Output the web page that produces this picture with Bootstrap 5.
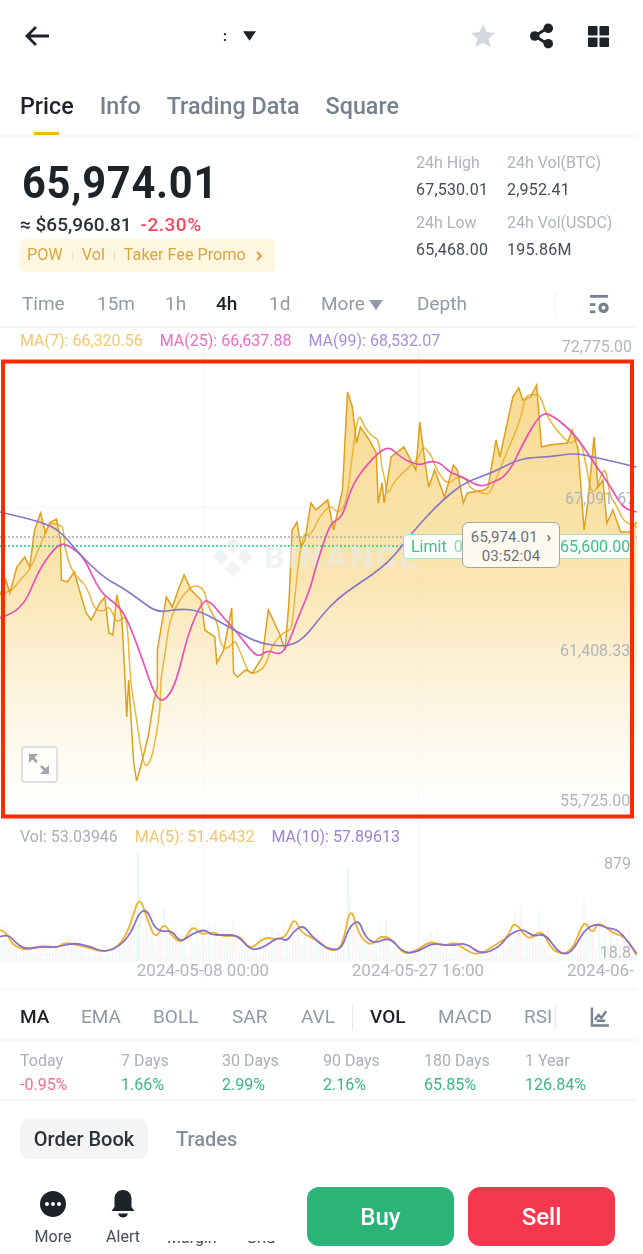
<!DOCTYPE html>
<html lang="en">
<head>
  <meta charset="UTF-8">
  <title>BTC/USDC Chart</title>
  <meta name="viewport" content="width=device-width, initial-scale=1">
  <link href="https://cdn.jsdelivr.net/npm/bootstrap@5.3.3/dist/css/bootstrap.min.css" rel="stylesheet">
  <style>
    body {
      font-family: Roboto, "Liberation Sans", sans-serif;
      color: #1e2329;
      background: #fff;
      overflow: hidden;
      height: 1254px;
    }
    .screen { width: 637px; height: 1254px; overflow: hidden; filter: blur(.4px); }
    .top-bar { height: 72px; padding: 0 27px 0 24px; }
    .title-mark { margin-left: 173px; font-size: 14px; line-height: 1; }
    .tab-row { height: 65px; padding: 0 20px; gap: 26px; border-bottom: 2px solid #f5f5f5; font-size: 23.3px; font-weight: 500; color: #76808f; }
    .tab-item { position: relative; padding-top: 17px; }
    .tab-item.on { color: #1e2329; }
    .tab-item.on::after { content: ""; position: absolute; left: 14px; width: 25px; height: 3px; bottom: 0; background: #f0b90b; }
    .ticker { height: 137px; padding: 0 21px 0 20px; }
    .last-price { font-size: 44px; font-weight: 700; letter-spacing: .8px; line-height: 1; margin: 24px 0 0 2px; transform: scaleX(.945); transform-origin: left; }
    .fiat { font-size: 19px; font-weight: 500; margin-top: 9px; line-height: 22px; color: #2b3139; }
    .fiat span { color: #f6465d; margin-left: 9px; letter-spacing: .5px; }
    .promo { margin-top: 3px; width: 255px; height: 33px; background: #fef6e0; color: #dca53d; border-radius: 6px; font-size: 16.2px; padding: 0 7px; gap: 9px; }
    .promo i { width: 1px; height: 8px; background: #f0dcae; }
    .stat-box { width: 91px; margin-top: 15px; }
    .stat-box.wide { width: 109px; }
    .stat-label { font-size: 16px; line-height: 22px; color: #aeb4bc; margin-bottom: 5px; white-space: nowrap; }
    .stat-val { font-size: 16px; letter-spacing: .2px; line-height: 22px; color: #474d57; margin-bottom: 11px; }
    .range-row { height: 54px; padding: 9px 0 0 22px; border-bottom: 2px solid #f5f5f5; font-size: 19px; color: #929aa5; }
    .range-row .on { color: #1e2329; font-weight: 500; }
    .range-sep { width: 1px; height: 26px; background: #f0f1f2; }
    .charts {
      position: relative;
      height: 662px;
      background:
        linear-gradient(#f3f4f6, #f3f4f6) 203px 0 / 1px 650px no-repeat,
        linear-gradient(#f3f4f6, #f3f4f6) 418px 0 / 1px 650px no-repeat;
      border-bottom: 2px solid #f7f7f8;
    }
    .legend-row { height: 26px; padding: 0 5px 0 20px; gap: 17px; font-size: 16px; line-height: 26px; white-space: nowrap; }
    .legend-low { padding-top: 4px; height: 30px; }
    .chart-svg { display: block; width: 637px; }
    .c-ma7 { color: #f3c76d; }
    .c-ma25 { color: #ee6cc4; }
    .c-ma99 { color: #a58fdb; }
    .c-vol { color: #a9afb8; }
    .c-ma5 { color: #f2c56a; }
    .c-ma10 { color: #9b84d3; }
    .c-axis { color: #b0b5bc; line-height: 38px; }
    .axis-text { font-size: 16px; fill: #b0b5bc; }
    .date-text { font-size: 17px; fill: #b0b5bc; }
    .expand-btn {
      position: absolute;
      left: 21px;
      top: 418px;
      width: 37px;
      height: 37px;
      border: 2px solid #dcdfe3;
      border-radius: 4px;
      background: rgba(255,255,255,.6);
    }
    .tip-box {
      position: absolute;
      left: 462px;
      top: 194px;
      width: 98px;
      height: 46px;
      background: #fefaf0;
      border: 1.5px solid #a6a59e;
      border-radius: 6px;
      font-size: 15px;
      letter-spacing: .1px;
      line-height: 19px;
      color: #6b7078;
      text-align: center;
      padding-top: 5px;
    }
    .tip-box b { color: #5e6673; margin-left: 5px; }
    .limit-tag {
      position: absolute;
      left: 403px;
      top: 206px;
      width: 227px;
      height: 25px;
      overflow: hidden;
      background: #fefefa;
      border: 1.5px solid #a5e0c5;
      border-right: 0;
      border-radius: 5px 0 0 5px;
      color: #3cc08c;
      font-size: 16px;
      line-height: 23px;
      padding-left: 7px;
      white-space: nowrap;
    }
    .limit-tag em { font-style: normal; opacity: .6; margin-left: 3px; }
    .limit-price { position: absolute; left: 149px; top: -2px; bottom: -2px; right: -4px; border: 1.5px solid #a5e0c5; border-radius: 5px; padding: 1px 0 0 6px; }
    .ind-row { height: 51px; padding: 5px 0 0 20px; border-bottom: 2px solid #f5f5f5; font-size: 19px; color: #929aa5; }
    .ind-row .on { color: #1e2329; font-weight: 500; }
    .ind-sep { width: 1px; height: 26px; background: #e6e8ea; }
    .perf-row { height: 60px; padding: 8px 20px 0; border-bottom: 2px solid #f5f5f5; }
    .perf-cell { flex: none; width: 101px; font-size: 16px; line-height: 24px; color: #a9afb8; }
    .perf-cell span { display: block; color: #37b985; }
    .perf-cell span.down { color: #f6708a; }
    .book-row { height: 75px; padding: 18px 20px 0; font-size: 20px; }
    .book-on { width: 128px; height: 40px; background: #f5f5f5; border-radius: 9px; text-align: center; line-height: 40px; font-weight: 500; color: #2b3139; }
    .book-off { line-height: 40px; margin-left: 28px; color: #848e9c; font-weight: 500; }
    .action-row { padding: 11px 22px 0 0; position: relative; }
    .act-item { width: 70px; text-align: center; font-size: 16px; color: #474d57; line-height: 20px; }
    .act-item svg { display: block; margin: 3px auto 9px; }
    .cut-tabs { position: absolute; top: 65px; height: 6px; overflow: hidden; font-size: 16px; line-height: 20px; color: #474d57; }
    .cut-tabs span { display: block; margin-top: -13px; }
    .trade-btn { width: 147px; height: 59px; border: 0; border-radius: 12px; color: #fff; font-size: 24px; font-weight: 500; }
    .buy-btn, .buy-btn:hover { background: #2ab477; color: #fff; }
    .sell-btn, .sell-btn:hover { background: #f6384f; color: #fff; }
  </style>
</head>
<body>
  <div class="screen">
  <!-- Header -->
  <div class="top-bar d-flex align-items-center">
    <svg width="26" height="24" viewBox="0 0 26 24" fill="none" stroke="#1e2329" stroke-width="2.8"><path d="M25 12H3M12 3l-9 9 9 9"/></svg>
    <span class="title-mark fw-bold">:</span>
    <svg class="ms-3" width="13" height="10" viewBox="0 0 14 10"><path d="M0 0h14L7 10z" fill="#1e2329"/></svg>
    <svg class="ms-auto" width="26" height="26" viewBox="0 0 26 26"><path d="M13 1l3.6 8 8.4.9-6.3 5.700 1.800 8.400L13 19.700 5.500 24l1.800-8.400L1 9.900 9.400 9z" fill="#d5d8de"/></svg>
    <svg style="margin-left:33px" width="25" height="28" viewBox="0 0 26 28" fill="#1e2329"><path d="M19 6L6 14l13 8" fill="none" stroke="#1e2329" stroke-width="3"/><circle cx="20" cy="6" r="5"/><circle cx="6" cy="14" r="5"/><circle cx="20" cy="22" r="5"/></svg>
    <svg style="margin-left:33px" width="23" height="23" viewBox="0 0 24 24" fill="#1e2329"><rect x="1" y="1" width="10" height="10" rx="1"/><rect x="13" y="1" width="10" height="10" rx="1"/><rect x="1" y="13" width="10" height="10" rx="1"/><rect x="13" y="13" width="10" height="10" rx="1"/></svg>
  </div>

  <div class="tab-row d-flex">
    <div class="tab-item on">Price</div>
    <div class="tab-item">Info</div>
    <div class="tab-item">Trading Data</div>
    <div class="tab-item">Square</div>
  </div>

  <!-- Ticker -->
  <div class="ticker d-flex">
    <div class="flex-grow-1">
      <div class="last-price">65,974.01</div>
      <div class="fiat">≈ $65,960.81<span>-2.30%</span></div>
      <div class="promo d-flex align-items-center">POW <i></i> Vol <i></i> Taker Fee Promo
        <svg width="8" height="10" viewBox="0 0 8 10" fill="none" stroke="#dca53d" stroke-width="2"><path d="M2 1l4 4-4 4"/></svg>
      </div>
    </div>
    <div class="stat-box">
      <div class="stat-label">24h High</div>
      <div class="stat-val">67,530.01</div>
      <div class="stat-label">24h Low</div>
      <div class="stat-val">65,468.00</div>
    </div>
    <div class="stat-box wide">
      <div class="stat-label">24h Vol(BTC)</div>
      <div class="stat-val">2,952.41</div>
      <div class="stat-label">24h Vol(USDC)</div>
      <div class="stat-val">195.86M</div>
    </div>
  </div>

  <div class="range-row d-flex align-items-center">
    <span style="width:75px">Time</span>
    <span style="width:68px">15m</span>
    <span style="width:51px">1h</span>
    <span class="on" style="width:53px">4h</span>
    <span style="width:52px">1d</span>
    <span class="d-flex align-items-center" style="width:96px">More
      <svg class="ms-1" width="14" height="10" viewBox="0 0 14 10"><path d="M0 0h14L7 10z" fill="#929aa5"/></svg>
    </span>
    <span style="width:138px">Depth</span>
    <i class="range-sep"></i>
    <svg class="ms-auto" style="margin-right:28px" width="20" height="24" viewBox="0 0 22 24" fill="#76808f"><rect x="1" y="1" width="20" height="3"/><rect x="1" y="10" width="6" height="3"/><rect x="1" y="18" width="6" height="3"/><circle cx="16" cy="15" r="4" fill="none" stroke="#76808f" stroke-width="3.500"/></svg>
  </div>

  <!-- Charts -->
  <div class="charts">
    <div class="legend-row d-flex">
      <span class="c-ma7">MA(7): 66,320.56</span>
      <span class="c-ma25">MA(25): 66,637.88</span>
      <span class="c-ma99">MA(99): 68,532.07</span>
      <span class="c-axis ms-auto">72,775.00</span>
    </div>
    <svg class="chart-svg" height="466" viewBox="0 354 637 466" id="mainChart">
      <defs>
        <linearGradient id="areaFill" gradientUnits="userSpaceOnUse" x1="0" y1="385" x2="0" y2="812">
          <stop offset="0" stop-color="#f7d47f" stop-opacity=".85"/>
          <stop offset=".45" stop-color="#f8dc96" stop-opacity=".75"/>
          <stop offset="1" stop-color="#fff" stop-opacity=".5"/>
        </linearGradient>
      </defs>
      <path d="M0 507H637M0 658H637M0 808H637" stroke="#f3f4f6"/>
      <path id="areaPath" fill="url(#areaFill)"/>
      <path id="ma7Path" fill="none" stroke="#edb53a" stroke-width="1.500"/>
      <path id="closePath" fill="none" stroke="#dfa01c" stroke-width="1.500"/>
      <path d="M0 537H637" stroke="#a9a9a9" stroke-width="1.500" stroke-dasharray="2 2"/>
      <path d="M0 546H405" stroke="#1fc585" stroke-width="1.500" stroke-dasharray="2 2"/>
      <path fill="#e4e6e9" opacity=".5" d="M233 537l8 8-8 8-8-8zM221 549l8 8-8 8-8-8zM245 549l8 8-8 8-8-8zM233 561l8 8-8 8-8-8z"/>
      <text x="264" y="568" font-size="32" font-weight="700" fill="#e8eaec" opacity=".6" letter-spacing="3">BINANCE</text>
      <path id="ma25Path" fill="none" stroke="#ea4fb5" stroke-width="1.700"/>
      <path id="ma99Path" fill="none" stroke="#8a75c9" stroke-width="1.700"/>
      <text class="axis-text" x="565" y="504">67,091.67</text>
      <text class="axis-text" x="560" y="656">61,408.33</text>
      <text class="axis-text" x="560" y="806">55,725.00</text>
      <rect x="3" y="361.500" width="629" height="455" fill="none" stroke="#ff2a00" stroke-width="4"/>
    </svg>
    <div class="limit-tag">Limit <em>0.0002</em><span class="limit-price">65,600.00</span></div>
    <div class="tip-box">65,974.01 <b>›</b><br>03:52:04</div>
    <div class="expand-btn">
      <svg width="33" height="33" viewBox="0 0 33 33" fill="#a1a5ab" stroke="#a1a5ab" stroke-width="2.500"><path d="M8 8l6 6M24 24l-6-6" fill="none"/><path stroke="none" d="M6 6h9l-9 9zM26 26h-9l9-9z"/></svg>
    </div>
    <div class="legend-row legend-low d-flex">
      <span class="c-vol">Vol: 53.03946</span>
      <span class="c-ma5">MA(5): 51.46432</span>
      <span class="c-ma10">MA(10): 57.89613</span>
    </div>
    <svg class="chart-svg" height="134" viewBox="0 850 637 134" id="volChart">
      <g id="volBars"></g>
      <path d="M0 960H637" stroke="#eef0f2"/>
      <path id="ma5Path" fill="none" stroke="#efb32c" stroke-width="1.800"/>
      <path id="ma10Path" fill="none" stroke="#8a70c8" stroke-width="1.800"/>
      <text class="axis-text" x="631" y="869" text-anchor="end">879</text>
      <text class="axis-text" x="631" y="958" text-anchor="end">18.8</text>
      <text class="date-text" x="203" y="976" text-anchor="middle">2024-05-08 00:00</text>
      <text class="date-text" x="418" y="976" text-anchor="middle">2024-05-27 16:00</text>
      <text class="date-text" x="567" y="976">2024-06-</text>
    </svg>
  </div>

  <!-- Indicators -->
  <div class="ind-row d-flex align-items-center">
    <span class="on" style="width:61px">MA</span>
    <span style="width:72px">EMA</span>
    <span style="width:79px">BOLL</span>
    <span style="width:69px">SAR</span>
    <span style="width:51px">AVL</span>
    <i class="ind-sep" style="margin-right:17px"></i>
    <span class="on" style="width:68px">VOL</span>
    <span style="width:86px">MACD</span>
    <span style="width:31px">RSI</span>
    <i class="ind-sep"></i>
    <svg class="ms-auto" style="margin-right:28px" width="19" height="22" viewBox="0 0 20 22" fill="none" stroke="#76808f" stroke-width="2.500"><path d="M2 1v19h18M5 14l4-5 3 3 5-7M7 15h9"/></svg>
  </div>

  <div class="perf-row d-flex">
    <div class="perf-cell">Today<span class="down">-0.95%</span></div>
    <div class="perf-cell">7 Days<span>1.66%</span></div>
    <div class="perf-cell">30 Days<span>2.99%</span></div>
    <div class="perf-cell">90 Days<span>2.16%</span></div>
    <div class="perf-cell">180 Days<span>65.85%</span></div>
    <div class="perf-cell">1 Year<span>126.84%</span></div>
  </div>

  <div class="book-row d-flex">
    <div class="book-on">Order Book</div>
    <div class="book-off">Trades</div>
  </div>

  <!-- Bottom actions -->
  <div class="action-row d-flex align-items-start">
    <div class="act-item" style="margin-left:18px">
      <svg width="28" height="28" viewBox="0 0 28 28"><circle cx="14" cy="14" r="13" fill="#1e2329"/><circle cx="8" cy="14" r="2" fill="#fff"/><circle cx="14" cy="14" r="2" fill="#fff"/><circle cx="20" cy="14" r="2" fill="#fff"/></svg>
      More
    </div>
    <div class="act-item">
      <svg width="26" height="28" viewBox="0 0 26 28" fill="#1e2329"><path d="M13 0c5.500 0 8.500 4 8.500 9v8l3 4H1.500l3-4V9C4.500 4 7.500 0 13 0z"/><path d="M8 23.500h10c-1 3-3 4-5 4s-4-1-5-4z"/></svg>
      Alert
    </div>
    <div class="cut-tabs" style="left:167px"><span>Margin</span></div>
    <div class="cut-tabs" style="left:246px"><span>Grid</span></div>
    <button type="button" class="btn trade-btn buy-btn ms-auto">Buy</button>
    <button type="button" class="btn trade-btn sell-btn" style="margin-left:14px">Sell</button>
  </div>
  </div>

  <script src="https://cdn.jsdelivr.net/npm/bootstrap@5.3.3/dist/js/bootstrap.bundle.min.js"></script>
  <script>
    const closePts = [[0,595],[6,580],[10,593],[17,567],[25,557],[30,567],[35,530],[41,513],[46,533],[50,523],[57,519],[61,540],[62,580],[68,582],[75,572],[81,593],[87,613],[92,620],[101,603],[106,597],[110,633],[114,635],[118,595],[123,617],[126,673],[128,717],[130,680],[135,763],[138,781],[143,763],[150,735],[155,703],[159,687],[159,650],[164,620],[168,597],[174,607],[180,590],[186,575],[193,590],[203,600],[207,630],[217,637],[219,663],[226,650],[234,608],[236,673],[240,677],[248,670],[255,673],[265,657],[271,610],[282,633],[288,650],[292,600],[295,530],[300,522],[304,547],[308,540],[314,503],[319,510],[331,500],[337,530],[346,490],[351,392],[356,407],[360,443],[364,427],[373,440],[380,453],[382,503],[386,483],[388,503],[395,457],[408,447],[420,470],[424,422],[429,460],[433,487],[439,470],[449,497],[458,465],[462,470],[468,503],[472,493],[489,490],[493,487],[501,440],[505,457],[518,397],[524,388],[528,400],[536,397],[542,385],[547,447],[555,445],[573,443],[578,430],[584,450],[590,530],[594,500],[600,437],[604,487],[609,480],[613,523],[619,510],[627,532],[636,532],[643,522]];
    const ma25Pts = [[0,618],[14,613],[25,602],[31,590],[41,567],[60,542],[72,547],[85,557],[101,593],[122,607],[133,630],[145,663],[157,697],[166,702],[178,683],[190,633],[205,600],[213,602],[226,618],[240,633],[253,650],[261,657],[271,650],[282,655],[290,647],[300,620],[313,590],[319,567],[331,530],[337,521],[346,517],[356,483],[379,455],[393,446],[404,457],[422,466],[435,461],[445,463],[455,473],[468,477],[484,487],[497,483],[513,475],[530,440],[545,415],[555,413],[580,433],[600,463],[617,487],[629,508],[643,512]];
    const ma99Pts = [[0,512],[21,517],[41,522],[60,530],[79,553],[104,577],[124,588],[137,597],[159,613],[178,609],[199,610],[219,620],[240,632],[261,643],[288,647],[306,640],[327,613],[342,598],[356,588],[393,563],[418,530],[447,500],[470,482],[497,473],[526,458],[555,457],[580,453],[600,457],[643,467]];
    // volume lines were read off a zoomed crop: x / 2.44, 820 + y / 3
    const ma10Raw = [[0,350],[20,342],[35,365],[60,388],[100,380],[140,382],[180,368],[220,380],[255,397],[290,380],[320,340],[340,275],[360,270],[375,320],[395,335],[420,332],[440,368],[470,340],[500,328],[515,345],[545,345],[580,345],[610,390],[640,385],[680,350],[700,365],[715,335],[740,315],[760,348],[785,375],[810,390],[835,385],[850,325],[875,297],[890,350],[915,372],[950,350],[985,400],[1020,395],[1055,368],[1100,378],[1135,368],[1175,405],[1220,380],[1240,345],[1275,325],[1300,350],[1330,340],[1365,402],[1395,400],[1425,330],[1455,310],[1480,325],[1510,328],[1553,400]];
    const ma5Raw = [[0,330],[15,335],[30,375],[65,392],[100,375],[140,385],[155,368],[180,372],[220,385],[255,397],[295,375],[320,310],[340,225],[360,300],[380,360],[400,305],[420,350],[445,372],[470,315],[490,345],[520,335],[545,350],[585,345],[610,392],[645,350],[680,360],[700,345],[718,290],[735,340],[775,360],[805,395],[835,385],[855,252],[875,345],[905,380],[930,345],[960,360],[985,405],[1020,390],[1050,362],[1080,380],[1110,365],[1130,385],[1165,408],[1215,370],[1240,350],[1255,300],[1290,365],[1322,325],[1350,400],[1395,400],[1425,295],[1445,345],[1460,302],[1495,340],[1525,350],[1553,405]];

    // screen is really 637 wide, the traced x values ran a bit long
    function squeeze(pts) {
      return pts.map(p => [p[0] * 0.99, p[1]]);
    }
    function toPath(pts) {
      return pts.map((p, i) => (i ? 'L' : 'M') + p[0].toFixed(1) + ' ' + p[1].toFixed(1)).join('');
    }
    // rounded line through the midpoints, for the moving averages
    function curvePath(pts) {
      let d = 'M' + pts[0][0].toFixed(1) + ' ' + pts[0][1].toFixed(1);
      for (let i = 1; i < pts.length - 1; i++) {
        const mx = (pts[i][0] + pts[i + 1][0]) / 2, my = (pts[i][1] + pts[i + 1][1]) / 2;
        d += 'Q' + pts[i][0].toFixed(1) + ' ' + pts[i][1].toFixed(1) + ' ' + mx.toFixed(1) + ' ' + my.toFixed(1);
      }
      const last = pts[pts.length - 1];
      return d + 'L' + last[0].toFixed(1) + ' ' + last[1].toFixed(1);
    }
    function volPts(raw) {
      return raw.map(p => [p[0] / 2.44, 820 + p[1] / 3]);
    }
    // MA(7) is just the close line smoothed and dragged to the right
    function smooth(pts) {
      return pts.map((p, i) => {
        const a = pts[Math.max(i - 2, 0)], b = pts[Math.max(i - 1, 0)];
        return [p[0] + 3, (a[1] + b[1] + p[1]) / 3];
      });
    }

    const closeLine = squeeze(closePts);
    document.getElementById('closePath').setAttribute('d', toPath(closeLine));
    document.getElementById('areaPath').setAttribute('d', toPath(closeLine) + 'L637 812L0 812Z');
    document.getElementById('ma7Path').setAttribute('d', curvePath(smooth(closeLine)));
    document.getElementById('ma25Path').setAttribute('d', curvePath(squeeze(ma25Pts)));
    document.getElementById('ma99Path').setAttribute('d', curvePath(squeeze(ma99Pts)));
    document.getElementById('ma5Path').setAttribute('d', curvePath(volPts(ma5Raw)));
    document.getElementById('ma10Path').setAttribute('d', curvePath(volPts(ma10Raw)));

    // faint volume bars
    const ma5Line = volPts(ma5Raw);
    let bars = '';
    for (let x = 1; x < 637; x += 3) {
      const near = ma5Line.reduce((m, p) => Math.abs(p[0] - x) < Math.abs(m[0] - x) ? p : m);
      const h = (960 - near[1]) * (0.4 + ((x * 37) % 17) / 14);
      const col = (x * 13) % 5 < 2 ? '#fef2f3' : '#f0faf6';
      bars += '<rect x="' + x + '" y="' + (960 - h).toFixed(1) + '" width="2" height="' + h.toFixed(1) + '" fill="' + col + '"/>';
    }
    bars += '<rect x="137" y="853" width="2" height="107" fill="#eaf8f2"/><rect x="347" y="867" width="2" height="93" fill="#eaf8f2"/>';
    document.getElementById('volBars').innerHTML = bars;
  </script>
</body>
</html>
